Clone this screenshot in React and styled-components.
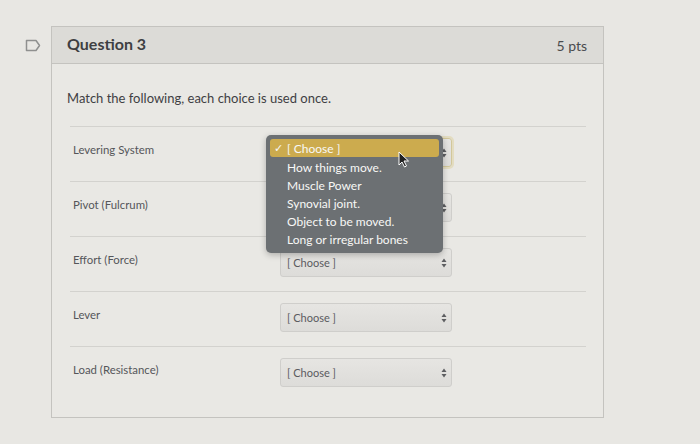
import React from 'react';
import styled, { createGlobalStyle } from 'styled-components';

const GlobalStyle = createGlobalStyle`
  body {
    margin: 0;
    background: #e8e7e3;
    font-family: Lato, "Open Sans", sans-serif;
  }
`;

const Page = styled.div`
  display: flex;
  align-items: flex-start;
  padding: 26px 0 0 25px;
  height: 418px;
`;

const FlagCol = styled.div`
  width: 26px;
  padding-top: 10px;
`;

const QuestionBox = styled.div`
  width: 551px;
  height: 390px;
  border: 1px solid #c4c3bf;
  background: #e9e8e4;
`;

const Header = styled.div`
  height: 36px;
  display: flex;
  align-items: center;
  justify-content: space-between;
  padding: 0 16px 0 15px;
  background: #dcdbd7;
  border-bottom: 1px solid #c4c3bf;
`;

const Title = styled.span`
  margin-top: -4px;
  font-size: 16px;
  font-weight: 700;
  color: #3e3f42;
`;

const Points = styled.span`
  font-size: 14px;
  color: #4a4b4e;
`;

const Body = styled.div`
  padding: 0 17px 0 15px;
`;

const Prompt = styled.p`
  margin: 26px 0 20px;
  font-size: 13px;
  color: #3f4043;
`;

const RowList = styled.div`
  margin: 0 0 0 3px;
`;

const Row = styled.div`
  position: relative;
  height: 54px;
  display: flex;
  align-items: flex-start;
  border-top: 1px solid #d3d2ce;
`;

const Label = styled.div`
  width: 207px;
  padding: 16px 0 0 3px;
  font-size: 11.4px;
  color: #55565a;
`;

const Select = styled.div`
  margin-top: 11px;
  width: 172px;
  height: 29px;
  box-sizing: border-box;
  display: flex;
  align-items: center;
  justify-content: space-between;
  padding: 0 4px 0 6px;
  border-radius: 3px;
  border: 1px solid ${p => (p.$focus ? '#d2c79a' : '#cfcecb')};
  box-shadow: ${p => (p.$focus ? '0 0 0 2px #e3dcc0' : 'none')};
  background: linear-gradient(#e6e5e2, #dddcd9);
  font-size: 11px;
  color: #5a5b5f;
`;

const Arrows = () => (
  <svg width="6" height="10" viewBox="0 0 6 10">
    <path d="M3 0.5L5.5 4H0.5Z" fill="#5d5e61" />
    <path d="M3 9.5L5.5 6H0.5Z" fill="#5d5e61" />
  </svg>
);

const Menu = styled.div`
  position: absolute;
  left: 196px;
  top: 8px;
  width: 177px;
  height: 118px;
  box-sizing: border-box;
  padding: 4px 4px;
  background: #6c7073;
  border-radius: 5px;
  box-shadow: 0 2px 6px rgba(0, 0, 0, 0.25);
  z-index: 2;
`;

const MenuItem = styled.div`
  height: ${p => (p.$active ? '18px' : '18.2px')};
  display: flex;
  align-items: center;
  padding-left: ${p => (p.$active ? '4px' : '17px')};
  margin-bottom: ${p => (p.$active ? '1px' : '0')};
  border-radius: 3px;
  background: ${p => (p.$active ? '#ccab4e' : 'transparent')};
  font-size: 12px;
  color: #f8f8f6;
  white-space: nowrap;
`;

const Check = styled.span`
  width: 13px;
  font-size: 11px;
`;

const Cursor = styled.svg`
  position: absolute;
  left: 328px;
  top: 24px;
  z-index: 3;
`;

const rows = [
  'Levering System',
  'Pivot (Fulcrum)',
  'Effort (Force)',
  'Lever',
  'Load (Resistance)',
];

const options = [
  'How things move.',
  'Muscle Power',
  'Synovial joint.',
  'Object to be moved.',
  'Long or irregular bones',
];

export default function App() {
  return (
    <>
      <GlobalStyle />
      <Page>
        <FlagCol>
          <svg width="16" height="13" viewBox="0 0 16 13">
            <path
              d="M1.5 1.5H11L14.5 6.5L11 11.5H1.5Z"
              fill="none"
              stroke="#8f908f"
              strokeWidth="1.5"
              strokeLinejoin="round"
            />
          </svg>
        </FlagCol>
        <QuestionBox>
          <Header>
            <Title>Question 3</Title>
            <Points>5 pts</Points>
          </Header>
          <Body>
            <Prompt>Match the following, each choice is used once.</Prompt>
            <RowList>
              {rows.map((r, i) => (
                <Row key={r}>
                  <Label>{r}</Label>
                  <Select $focus={i === 0}>
                    <span>[ Choose ]</span>
                    <Arrows />
                  </Select>
                  {i === 0 && (
                    <>
                      <Menu>
                        <MenuItem $active>
                          <Check>✓</Check>[ Choose ]
                        </MenuItem>
                        {options.map(o => (
                          <MenuItem key={o}>{o}</MenuItem>
                        ))}
                      </Menu>
                      <Cursor width="12" height="17" viewBox="0 0 12 17">
                        <path
                          d="M1 1V14L4 11L6.5 16L8.5 15L6 10H10.5Z"
                          fill="#222"
                          stroke="#fff"
                          strokeWidth="1"
                          strokeLinejoin="round"
                        />
                      </Cursor>
                    </>
                  )}
                </Row>
              ))}
            </RowList>
          </Body>
        </QuestionBox>
      </Page>
    </>
  );
}
